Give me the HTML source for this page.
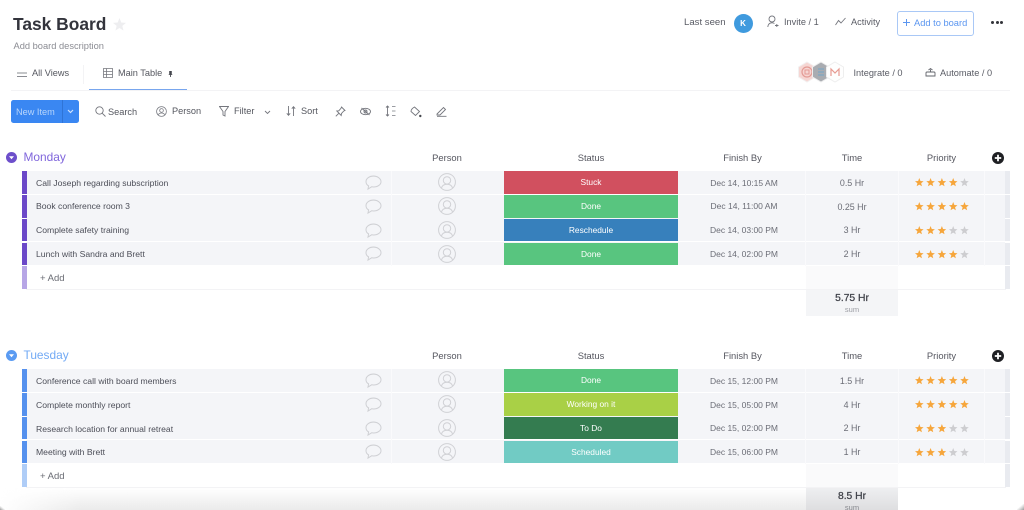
<!DOCTYPE html>
<html><head><meta charset="utf-8"><style>
html,body{margin:0;padding:0;background:#fff}
#p{position:relative;width:1024px;height:510px;overflow:hidden;background:#fff;font-family:"Liberation Sans",sans-serif;color:#4a4c57;filter:blur(.35px)}
#p div,#p span.a,#p svg.a{position:absolute}
.t{white-space:nowrap;line-height:12px;font-size:9.2px}
.h{font-size:9.4px;color:#55565f;text-align:center;line-height:12px;white-space:nowrap}
.r{left:26px;width:979px;height:23.1px;background:#f4f5f8}
.b{left:21.5px;width:5px;height:22.6px}
.v{width:1px;background:#fafafc}
.e{left:1005px;width:5px;height:22.6px;background:#e9ebf0}
.s{left:504px;width:174px;height:22.6px;color:#fff;font-size:8.4px;line-height:22.6px;text-align:center}
.n{left:36px;font-size:8.65px;color:#4c4e58;line-height:12px;white-space:nowrap}
.d{left:680.5px;width:127px;text-align:center;font-size:8.5px;color:#6b6d76;line-height:12px;white-space:nowrap}
.m{left:806px;width:92px;text-align:center;font-size:8.9px;color:#6b6d76;line-height:12px}
.l{fill:none;stroke:#74767d;stroke-width:.9}
</style></head><body><div id="p">
<svg width="0" height="0" style="position:absolute"><defs>
<path id="st" transform="scale(.78)" d="M5.5 0 L7 3.8 L11 4.1 L7.9 6.7 L8.9 10.6 L5.5 8.500 L2.100 10.600 L3.100 6.700 L0 4.100 L4 3.800Z"/>
<g id="cm"><path transform="scale(1,1.08)" d="M8.500 1C4.300 1 1 3.200 1 6.200c0 1.700 1 3 2.600 3.900L3 13l3.600-2.100c.6.100 1.200.2 1.900.2 4.200 0 7.500-2.200 7.500-4.900S12.700 1 8.500 1Z" fill="none" stroke="#cfd0d4" stroke-width="1"/></g>
<g id="pr" fill="none" stroke="#d0d1d5" stroke-width="1"><circle cx="9" cy="9" r="8.400"/><circle cx="9" cy="7.400" r="3.700"/><path d="M3.400 15c.8-2.700 3-3.800 5.600-3.800s4.800 1.100 5.600 3.800"/></g>
<g id="s4"><use href="#st" x="0" fill="#f6a63c"/><use href="#st" x="11.300" fill="#f6a63c"/><use href="#st" x="22.600" fill="#f6a63c"/><use href="#st" x="33.900" fill="#f6a63c"/><use href="#st" x="45.200" fill="#cdcdd0"/></g>
<g id="s5"><use href="#st" x="0" fill="#f6a63c"/><use href="#st" x="11.300" fill="#f6a63c"/><use href="#st" x="22.600" fill="#f6a63c"/><use href="#st" x="33.900" fill="#f6a63c"/><use href="#st" x="45.200" fill="#f6a63c"/></g>
<g id="s3"><use href="#st" x="0" fill="#f6a63c"/><use href="#st" x="11.300" fill="#f6a63c"/><use href="#st" x="22.600" fill="#f6a63c"/><use href="#st" x="33.900" fill="#cdcdd0"/><use href="#st" x="45.200" fill="#cdcdd0"/></g>
<g id="pl"><circle cx="6" cy="6" r="6" fill="#1f2024"/><path d="M6 2.800V9.200M2.800 6H9.200" stroke="#fff" stroke-width="1.800"/></g>
</defs></svg>

<!-- header -->
<div class="t" style="left:13px;top:13px;font-size:17.4px;line-height:22px;font-weight:700;color:#33343c">Task Board</div>
<svg class="a" style="left:113px;top:18px" width="13" height="13" viewBox="0 0 8.6 8.6"><use href="#st" fill="#eeeef0"/></svg>
<div class="t" style="left:13.500px;top:40px;font-size:9.300px;color:#8b8c93">Add board description</div>
<div class="t" style="left:684px;top:16.500px;font-size:9.600px;color:#5a5c65">Last seen</div>
<div style="left:733.500px;top:13.500px;width:19px;height:19px;border-radius:50%;background:#3f9ade;color:#fff;font-size:8px;font-weight:700;line-height:19px;text-align:center">K</div>
<svg class="a" style="left:767px;top:15px" width="12" height="13" viewBox="0 0 12 13"><circle cx="5" cy="4" r="3" class="l"/><path d="M.8 12c.3-3 2-4.200 4.200-4.200 1 0 1.800.2 2.400.7M8 10.500h3.500M9.800 9v3" class="l"/></svg>
<div class="t" style="left:784px;top:16px;font-size:9.200px;color:#5a5c65">Invite / 1</div>
<svg class="a" style="left:835px;top:17px" width="11" height="9" viewBox="0 0 11 9"><path d="M.5 8 L3.500 3.500 L6 6 L10.500 1" class="l"/></svg>
<div class="t" style="left:851px;top:16px;font-size:9.200px;color:#5a5c65">Activity</div>
<div style="left:897px;top:10.500px;width:75px;height:23px;border:1px solid #a9c8f6;border-radius:3px"></div>
<svg class="a" style="left:903px;top:18.500px" width="7" height="7"><path d="M3.500 0V7M0 3.500H7" stroke="#5b96f0"/></svg>
<div class="t" style="left:914px;top:16.500px;font-size:9.300px;color:#5b96f0">Add to board</div>
<div style="left:991px;top:21px;width:3px;height:3px;border-radius:50%;background:#33343a"></div>
<div style="left:995.500px;top:21px;width:3px;height:3px;border-radius:50%;background:#33343a"></div>
<div style="left:1000px;top:21px;width:3px;height:3px;border-radius:50%;background:#33343a"></div>

<!-- tabs -->
<svg class="a" style="left:17px;top:71px" width="10" height="7" viewBox="0 0 10 7"><path d="M0 2H10M0 5.500H10" stroke="#8a8c92" stroke-width=".9"/></svg>
<div class="t" style="left:32px;top:67px;font-size:9.200px;color:#55575f">All Views</div>
<div style="left:83px;top:65px;width:1px;height:19px;background:#f3f3f5"></div>
<svg class="a" style="left:102.500px;top:68px" width="10" height="10" viewBox="0 0 10 10"><path d="M.5.500h9v9h-9zM.5 3.500h9M.5 6.500h9M3.500.500v9" fill="none" stroke="#75777e" stroke-width=".8"/></svg>
<div class="t" style="left:118px;top:67px;font-size:9.200px;color:#55575f">Main Table</div>
<svg class="a" style="left:167.500px;top:70.500px" width="5" height="6" viewBox="0 0 5 7"><path d="M1 0H4V3.500L5 4.500H3V7H2V4.500H0L1 3.500Z" fill="#44464d"/></svg>
<div style="left:11px;top:89.500px;width:999px;height:1px;background:#f3f3f5"></div>
<div style="left:89px;top:88.500px;width:98px;height:1.500px;background:#78a6ee"></div>

<!-- integrations -->
<svg class="a" style="left:796px;top:61px" width="54" height="22" viewBox="0 0 54 22">
<path d="M11 1 L19.500 6 V16 L11 21 L2.500 16 V6Z" fill="#f6d6d3" stroke="#f2f0f0"/>
<circle cx="11" cy="11" r="5" fill="none" stroke="#e49a94" stroke-width="1.200"/><rect x="9" y="9" width="4" height="4" fill="none" stroke="#e49a94"/>
<path d="M25 1 L33.500 6 V16 L25 21 L16.500 16 V6Z" fill="#a9acb1" stroke="#eee"/>
<path d="M22 8h6M22 11h6M22 14h6" stroke="#7fa7c4" stroke-width="1.300"/>
<path d="M39 1 L47.500 6 V16 L39 21 L30.500 16 V6Z" fill="#fefefe" stroke="#eeeeee"/>
<path d="M35 15V8L39 12L43 8V15" fill="none" stroke="#e79b92" stroke-width="1.200"/>
</svg>
<div class="t" style="left:853.500px;top:66.500px;font-size:9.200px;color:#5a5c65">Integrate / 0</div>
<svg class="a" style="left:925px;top:66.500px" width="11" height="11" viewBox="0 0 11 11"><path d="M2 5h7a1 1 0 0 1 1 1v3H1V6a1 1 0 0 1 1-1ZM5.500 5V2.500M3.500 3l2-1.500 2 1.500" fill="none" stroke="#62646b" stroke-width=".9"/></svg>
<div class="t" style="left:940px;top:66.500px;font-size:9.200px;color:#5a5c65">Automate / 0</div>

<!-- toolbar -->
<div style="left:11px;top:100px;width:68px;height:22.500px;background:#3a87f2;border-radius:2.500px"></div>
<div style="left:61.500px;top:100px;width:1px;height:22.500px;background:#2f74d6"></div>
<div class="t" style="left:16px;top:105.500px;font-size:9.200px;color:#b9d6fb">New Item</div>
<svg class="a" style="left:67px;top:109px" width="7" height="5" viewBox="0 0 7 5"><path d="M1 1L3.500 3.500L6 1" fill="none" stroke="#cfe2fc" stroke-width="1.200"/></svg>
<svg class="a" style="left:94.500px;top:105.500px" width="11" height="11" viewBox="0 0 11 11"><circle cx="4.500" cy="4.500" r="3.700" class="l"/><path d="M7.300 7.300L10.500 10.500" class="l"/></svg>
<div class="t" style="left:108px;top:105.800px;font-size:9.200px;color:#55575f">Search</div>
<svg class="a" style="left:156px;top:106px" width="11" height="11" viewBox="0 0 18 18"><circle cx="9" cy="9" r="8" fill="none" stroke="#7a7c83" stroke-width="1.300"/><circle cx="9" cy="7.300" r="3" fill="none" stroke="#7a7c83" stroke-width="1.300"/><path d="M3.800 14.500c1-2.200 3-3 5.200-3s4.200.8 5.200 3" fill="none" stroke="#7a7c83" stroke-width="1.300"/></svg>
<div class="t" style="left:172px;top:105px;font-size:9.200px;color:#55575f">Person</div>
<svg class="a" style="left:218.500px;top:105.500px" width="10" height="11" viewBox="0 0 10 11"><path d="M.5.500h9L6 5.500V10L4 9V5.500Z" class="l"/></svg>
<div class="t" style="left:234px;top:105px;font-size:9.200px;color:#55575f">Filter</div>
<svg class="a" style="left:264px;top:109.500px" width="7" height="5" viewBox="0 0 7 5"><path d="M1 1L3.500 3.500L6 1" class="l"/></svg>
<svg class="a" style="left:285.500px;top:105.500px" width="10" height="10" viewBox="0 0 10 10"><path d="M2.500 0V9M.8 7.300L2.500 9.300L4.200 7.300M7.500 10V1M5.800 2.700L7.500.700L9.200 2.700" class="l"/></svg>
<div class="t" style="left:301px;top:105px;font-size:9.200px;color:#55575f">Sort</div>
<svg class="a" style="left:335px;top:105.500px" width="11" height="11" viewBox="0 0 11 11"><path d="M6.500 1L10 4.500L8.800 5L6.500 7.500L6.200 9.500L1.800 5L3.800 4.800L6 2.300ZM3.800 7.300L.8 10.300" class="l"/></svg>
<svg class="a" style="left:360px;top:107px" width="11" height="9" viewBox="0 0 11 9"><ellipse cx="5.500" cy="4.500" rx="5" ry="3.200" class="l"/><circle cx="5.500" cy="4.500" r="1.500" class="l"/><path d="M1.500 1L9.500 8" class="l"/></svg>
<svg class="a" style="left:385px;top:105px" width="11" height="12" viewBox="0 0 11 12"><path d="M2.500 1V11M1 2.500L2.500 1L4 2.500M1 9.500L2.500 11L4 9.500" class="l"/><path d="M7 1.500h3.500M7 6h3.500M7 10.500h3.500" stroke="#9a9ca2"/></svg>
<svg class="a" style="left:410px;top:105.500px" width="12" height="12" viewBox="0 0 12 12"><path d="M4.500 1L9.500 5.500L5.500 9.500L1 5.500C.8 4 2.500 2 4.500 1Z" class="l"/><circle cx="10.300" cy="10" r="1.200" fill="#44464d"/></svg>
<svg class="a" style="left:435.500px;top:105.500px" width="11" height="11" viewBox="0 0 11 11"><path d="M1 8L7.500 1.500L9.500 3.500L4 9H1ZM1 10.300H10.500" class="l"/></svg>

<!-- MONDAY -->
<svg class="a" style="left:6px;top:152px" width="11" height="11" viewBox="0 0 11 11"><circle cx="5.500" cy="5.500" r="5.500" fill="#6d4fcb"/><path d="M3 4.300H8L5.500 7.300Z" fill="#fff"/></svg>
<div class="t" style="left:23.500px;top:150px;font-size:11.900px;line-height:15px;color:#8066dc">Monday</div>
<div class="h" style="left:407px;width:80px;top:152px">Person</div>
<div class="h" style="left:551px;width:80px;top:152px">Status</div>
<div class="h" style="left:702.500px;width:80px;top:152px">Finish By</div>
<div class="h" style="left:812px;width:80px;top:152px">Time</div>
<div class="h" style="left:901.500px;width:80px;top:152px">Priority</div>
<svg class="a" style="left:991.500px;top:152px" width="12" height="12"><use href="#pl"/></svg>

<div class="r" style="top:171px"></div><div class="r" style="top:194.700px"></div><div class="r" style="top:218.400px"></div><div class="r" style="top:242.100px"></div>
<div class="b" style="top:171px;background:#6b48c8"></div><div class="b" style="top:195px;background:#6b48c8"></div><div class="b" style="top:218.700px;background:#6b48c8"></div><div class="b" style="top:242.500px;background:#6b48c8"></div>
<div class="b" style="top:266.200px;background:#b7a6e6"></div>
<div class="e" style="top:171px"></div><div class="e" style="top:195px"></div><div class="e" style="top:218.700px"></div><div class="e" style="top:242.500px"></div><div class="e" style="top:266.200px"></div>
<div class="v" style="left:391px;top:171px;height:95px"></div><div class="v" style="left:805px;top:171px;height:95px"></div><div class="v" style="left:898px;top:171px;height:95px"></div><div class="v" style="left:984px;top:171px;height:95px"></div>

<div class="n" style="top:177px">Call Joseph regarding subscription</div>
<div class="n" style="top:200.300px">Book conference room 3</div>
<div class="n" style="top:224.300px">Complete safety training</div>
<div class="n" style="top:247.700px">Lunch with Sandra and Brett</div>
<div class="t" style="left:40px;top:273px;font-size:9.500px;color:#6a6c74">+ Add</div>

<svg class="a" style="left:365px;top:175px" width="17" height="16"><use href="#cm"/></svg>
<svg class="a" style="left:365px;top:199px" width="17" height="16"><use href="#cm"/></svg>
<svg class="a" style="left:365px;top:222.700px" width="17" height="16"><use href="#cm"/></svg>
<svg class="a" style="left:365px;top:246px" width="17" height="16"><use href="#cm"/></svg>
<svg class="a" style="left:438px;top:173px" width="18" height="18"><use href="#pr"/></svg>
<svg class="a" style="left:438px;top:197px" width="18" height="18"><use href="#pr"/></svg>
<svg class="a" style="left:438px;top:220.700px" width="18" height="18"><use href="#pr"/></svg>
<svg class="a" style="left:438px;top:244.500px" width="18" height="18"><use href="#pr"/></svg>

<div class="s" style="top:171px;background:#d1505f">Stuck</div>
<div class="s" style="top:195px;background:#58c57f">Done</div>
<div class="s" style="top:218.700px;background:#3780bc">Reschedule</div>
<div class="s" style="top:242.500px;background:#58c57f">Done</div>

<div class="d" style="top:176.500px">Dec 14, 10:15 AM</div>
<div class="d" style="top:200px">Dec 14, 11:00 AM</div>
<div class="d" style="top:224px">Dec 14, 03:00 PM</div>
<div class="d" style="top:248px">Dec 14, 02:00 PM</div>
<div class="m" style="top:176.500px">0.5 Hr</div>
<div class="m" style="top:200.500px">0.25 Hr</div>
<div class="m" style="top:224px">3 Hr</div>
<div class="m" style="top:248px">2 Hr</div>
<svg class="a" style="left:915px;top:178px" width="57" height="11"><use href="#s4"/></svg>
<svg class="a" style="left:915px;top:202px" width="57" height="11"><use href="#s5"/></svg>
<svg class="a" style="left:915px;top:225.500px" width="57" height="11"><use href="#s3"/></svg>
<svg class="a" style="left:915px;top:249.500px" width="57" height="11"><use href="#s4"/></svg>
<div style="left:806px;top:266.200px;width:92px;height:23px;background:#fafafb"></div>
<div style="left:26px;top:288.500px;width:980px;height:1.200px;background:#f3f3f5"></div>
<div style="left:806px;top:289.500px;width:92px;height:26px;background:#f4f5f7"></div>
<div class="m" style="top:292.500px;font-size:10.300px;color:#3e4048;-webkit-text-stroke:.25px #3e4048">5.75 Hr</div>
<div class="m" style="top:304px;font-size:7.500px;color:#9b9da3">sum</div>

<!-- TUESDAY -->
<svg class="a" style="left:6px;top:350px" width="11" height="11" viewBox="0 0 11 11"><circle cx="5.500" cy="5.500" r="5.500" fill="#5a9bf2"/><path d="M3 4.300H8L5.500 7.300Z" fill="#fff"/></svg>
<div class="t" style="left:23.500px;top:348px;font-size:11.900px;line-height:15px;color:#72aaf5">Tuesday</div>
<div class="h" style="left:407px;width:80px;top:350px">Person</div>
<div class="h" style="left:551px;width:80px;top:350px">Status</div>
<div class="h" style="left:702.500px;width:80px;top:350px">Finish By</div>
<div class="h" style="left:812px;width:80px;top:350px">Time</div>
<div class="h" style="left:901.500px;width:80px;top:350px">Priority</div>
<svg class="a" style="left:991.500px;top:350px" width="12" height="12"><use href="#pl"/></svg>

<div class="r" style="top:369px"></div><div class="r" style="top:392.700px"></div><div class="r" style="top:416.400px"></div><div class="r" style="top:440.100px"></div>
<div class="b" style="top:369px;background:#5591ee"></div><div class="b" style="top:393px;background:#5591ee"></div><div class="b" style="top:416.700px;background:#5591ee"></div><div class="b" style="top:440.500px;background:#5591ee"></div>
<div class="b" style="top:464.200px;background:#afcdf7"></div>
<div class="e" style="top:369px"></div><div class="e" style="top:393px"></div><div class="e" style="top:416.700px"></div><div class="e" style="top:440.500px"></div><div class="e" style="top:464.200px"></div>
<div class="v" style="left:391px;top:369px;height:95px"></div><div class="v" style="left:805px;top:369px;height:95px"></div><div class="v" style="left:898px;top:369px;height:95px"></div><div class="v" style="left:984px;top:369px;height:95px"></div>

<div class="n" style="top:375px">Conference call with board members</div>
<div class="n" style="top:398.800px">Complete monthly report</div>
<div class="n" style="top:422.600px">Research location for annual retreat</div>
<div class="n" style="top:445.700px">Meeting with Brett</div>
<div class="t" style="left:40px;top:471px;font-size:9.500px;color:#6a6c74">+ Add</div>

<svg class="a" style="left:365px;top:373px" width="17" height="16"><use href="#cm"/></svg>
<svg class="a" style="left:365px;top:397px" width="17" height="16"><use href="#cm"/></svg>
<svg class="a" style="left:365px;top:420.700px" width="17" height="16"><use href="#cm"/></svg>
<svg class="a" style="left:365px;top:444px" width="17" height="16"><use href="#cm"/></svg>
<svg class="a" style="left:438px;top:371px" width="18" height="18"><use href="#pr"/></svg>
<svg class="a" style="left:438px;top:395px" width="18" height="18"><use href="#pr"/></svg>
<svg class="a" style="left:438px;top:418.700px" width="18" height="18"><use href="#pr"/></svg>
<svg class="a" style="left:438px;top:442.500px" width="18" height="18"><use href="#pr"/></svg>

<div class="s" style="top:369px;background:#58c57f">Done</div>
<div class="s" style="top:393px;background:#a9d046">Working on it</div>
<div class="s" style="top:416.700px;background:#347c50">To Do</div>
<div class="s" style="top:440.500px;background:#71cbc4">Scheduled</div>

<div class="d" style="top:374.500px">Dec 15, 12:00 PM</div>
<div class="d" style="top:398.500px">Dec 15, 05:00 PM</div>
<div class="d" style="top:422px">Dec 15, 02:00 PM</div>
<div class="d" style="top:446px">Dec 15, 06:00 PM</div>
<div class="m" style="top:374.500px">1.5 Hr</div>
<div class="m" style="top:398.500px">4 Hr</div>
<div class="m" style="top:422px">2 Hr</div>
<div class="m" style="top:446px">1 Hr</div>
<svg class="a" style="left:915px;top:376px" width="57" height="11"><use href="#s5"/></svg>
<svg class="a" style="left:915px;top:400px" width="57" height="11"><use href="#s5"/></svg>
<svg class="a" style="left:915px;top:423.500px" width="57" height="11"><use href="#s3"/></svg>
<svg class="a" style="left:915px;top:447.500px" width="57" height="11"><use href="#s3"/></svg>
<div style="left:806px;top:464.200px;width:92px;height:23px;background:#fafafb"></div>
<div style="left:26px;top:486.500px;width:980px;height:1.200px;background:#f3f3f5"></div>

<!-- bottom shadow -->
<div style="left:0;top:488px;width:898px;height:22px;background:linear-gradient(to bottom,rgba(236,236,236,0),rgba(232,232,232,.9));-webkit-mask-image:linear-gradient(to right,transparent 0,#000 9%);mask-image:linear-gradient(to right,transparent 0,#000 9%)"></div>
<div style="left:806px;top:487.500px;width:92px;height:23px;background:linear-gradient(to bottom,#eeeff1,#dddddf)"></div>
<div class="m" style="top:490.500px;font-size:10.300px;color:#3e4048;-webkit-text-stroke:.25px #3e4048">8.5 Hr</div>
<div class="m" style="top:502px;font-size:7.500px;color:#85878d">sum</div>
<div style="left:0;top:506px;width:5px;height:4px;background:linear-gradient(to top right,#9a9a9a 0,#d8d8d8 35%,rgba(255,255,255,0) 60%)"></div>
<div style="left:1017px;top:504px;width:7px;height:6px;background:linear-gradient(to top left,#9a9a9a 0,#d8d8d8 35%,rgba(255,255,255,0) 60%)"></div>
</div></body></html>
